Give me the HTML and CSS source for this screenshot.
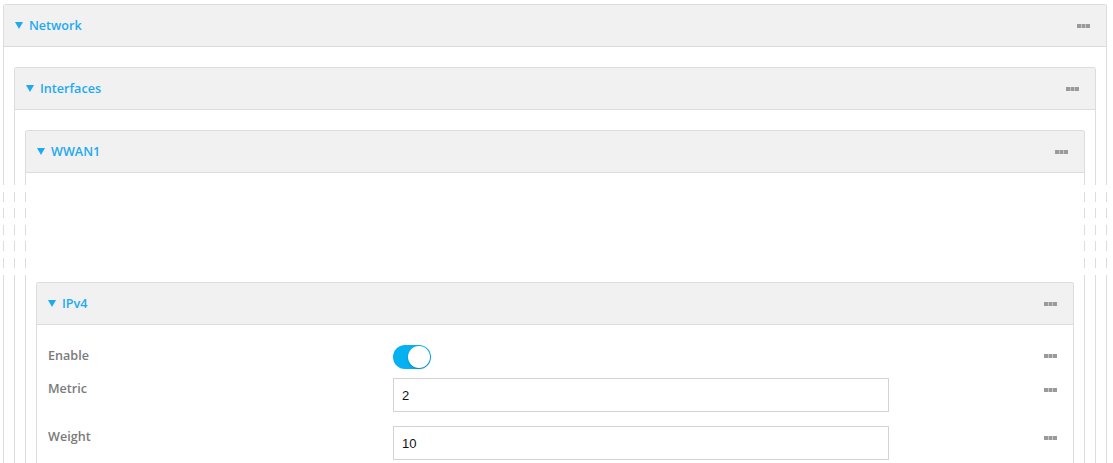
FILE: index.html
```html
<!DOCTYPE html>
<html>
<head>
<meta charset="utf-8">
<link rel="stylesheet" href="styles.css">
</head>
<body>
<div class="page">
  <section class="panel">
    <div class="panel-head">
      <svg class="caret" width="8" height="7" viewBox="0 0 8 7"><polygon points="0,0 8,0 4,7" fill="#1eaaf1"/></svg>
      <span class="title">Network</span>
      <svg class="more" width="13" height="4" viewBox="0 0 13 4"><rect x="0" y="0" width="4" height="4"/><rect x="4.5" y="0" width="4" height="4"/><rect x="9" y="0" width="4" height="4"/></svg>
    </div>
    <div class="panel-body">
      <section class="panel">
        <div class="panel-head">
          <svg class="caret" width="8" height="7" viewBox="0 0 8 7"><polygon points="0,0 8,0 4,7" fill="#1eaaf1"/></svg>
          <span class="title">Interfaces</span>
          <svg class="more" width="13" height="4" viewBox="0 0 13 4"><rect x="0" y="0" width="4" height="4"/><rect x="4.5" y="0" width="4" height="4"/><rect x="9" y="0" width="4" height="4"/></svg>
        </div>
        <div class="panel-body">
          <section class="panel">
            <div class="panel-head">
              <svg class="caret" width="8" height="7" viewBox="0 0 8 7"><polygon points="0,0 8,0 4,7" fill="#1eaaf1"/></svg>
              <span class="title">WWAN1</span>
              <svg class="more" width="13" height="4" viewBox="0 0 13 4"><rect x="0" y="0" width="4" height="4"/><rect x="4.5" y="0" width="4" height="4"/><rect x="9" y="0" width="4" height="4"/></svg>
            </div>
            <div class="panel-body gap-body">
              <section class="panel">
                <div class="panel-head">
                  <svg class="caret" width="8" height="7" viewBox="0 0 8 7"><polygon points="0,0 8,0 4,7" fill="#1eaaf1"/></svg>
                  <span class="title">IPv4</span>
                  <svg class="more" width="13" height="4" viewBox="0 0 13 4"><rect x="0" y="0" width="4" height="4"/><rect x="4.5" y="0" width="4" height="4"/><rect x="9" y="0" width="4" height="4"/></svg>
                </div>
                <div class="form-body">
                  <div class="row row-toggle">
                    <span class="label">Enable</span>
                    <span class="toggle"><span class="knob"></span></span>
                    <span class="row-more"><svg class="more" width="13" height="4" viewBox="0 0 13 4"><rect x="0" y="0" width="4" height="4"/><rect x="4.5" y="0" width="4" height="4"/><rect x="9" y="0" width="4" height="4"/></svg></span>
                  </div>
                  <div class="row row-input">
                    <span class="label">Metric</span>
                    <input class="field" type="text" value="2">
                    <span class="row-more"><svg class="more" width="13" height="4" viewBox="0 0 13 4"><rect x="0" y="0" width="4" height="4"/><rect x="4.5" y="0" width="4" height="4"/><rect x="9" y="0" width="4" height="4"/></svg></span>
                  </div>
                  <div class="row row-input">
                    <span class="label">Weight</span>
                    <input class="field" type="text" value="10">
                    <span class="row-more"><svg class="more" width="13" height="4" viewBox="0 0 13 4"><rect x="0" y="0" width="4" height="4"/><rect x="4.5" y="0" width="4" height="4"/><rect x="9" y="0" width="4" height="4"/></svg></span>
                  </div>
                </div>
              </section>
            </div>
          </section>
        </div>
      </section>
    </div>
  </section>
  <div class="break"></div>
</div>
</body>
</html>
```

FILE: styles.css
```css
html, body {
  margin: 0;
  padding: 0;
  background: #fff;
  overflow: hidden;
  height: 463px;
}
body {
  font-family: "Open Sans", "Noto Sans", sans-serif;
  font-size: 12.6px;
}
.page {
  position: relative;
  padding: 4px 6px 0 3px;
}
.panel {
  border: 1px solid #dcdcdc;
  border-bottom: none;
  border-radius: 3px 3px 0 0;
  background: #fff;
}
.panel-head {
  height: 41px;
  background: #f1f1f1;
  border-bottom: 1px solid #dcdcdc;
  border-radius: 3px 3px 0 0;
  display: flex;
  align-items: center;
  padding: 0 16px 0 11px;
}
.caret {
  display: block;
  margin-right: 6px;
}
.title {
  color: #1eaaf1;
  font-weight: 600;
  font-size: 12.6px;
  line-height: 18px;
  flex: 1;
}
.more {
  display: block;
  fill: #9a9a9a;
}
.panel-body {
  padding: 20px 10px 0;
}
.gap-body {
  padding-top: 109px;
}
.form-body {
  padding: 20px 16px 40px 11px;
}
.row {
  display: grid;
  grid-template-columns: 345px 496px 1fr;
  align-items: start;
}
.row-toggle {
  height: 24px;
  margin-bottom: 9px;
}
.row-input {
  margin-bottom: 14px;
}
.label {
  color: #7b7b7b;
  font-weight: 600;
  line-height: 20px;
  padding-top: 1px;
}
.row-more {
  display: flex;
  justify-content: flex-end;
  align-items: center;
  height: 20px;
  margin-top: 1px;
}
.row-input .row-more {
  margin-top: 2px;
}
.toggle {
  width: 38px;
  height: 24px;
  border-radius: 12px;
  background: #06b1f1;
  display: flex;
  align-items: center;
  justify-content: flex-end;
  box-sizing: border-box;
  padding-right: 1px;
}
.knob {
  width: 22px;
  height: 22px;
  border-radius: 50%;
  background: #fff;
  box-shadow: 0 1px 2px rgba(0,0,0,0.25);
}
.field {
  box-sizing: border-box;
  width: 496px;
  height: 34px;
  border: 1px solid #d3d3d3;
  border-radius: 0;
  padding: 0 8px;
  margin: 0;
  font-family: "Liberation Sans", Arial, sans-serif;
  font-size: 13px;
  color: #111;
  background: #fff;
  outline: none;
}
.break {
  position: absolute;
  left: 0;
  right: 0;
  top: 185px;
  height: 90px;
  background: repeating-linear-gradient(to bottom, #fff 0, #fff 6.6px, transparent 6.6px, transparent 16.6px);
}
```
